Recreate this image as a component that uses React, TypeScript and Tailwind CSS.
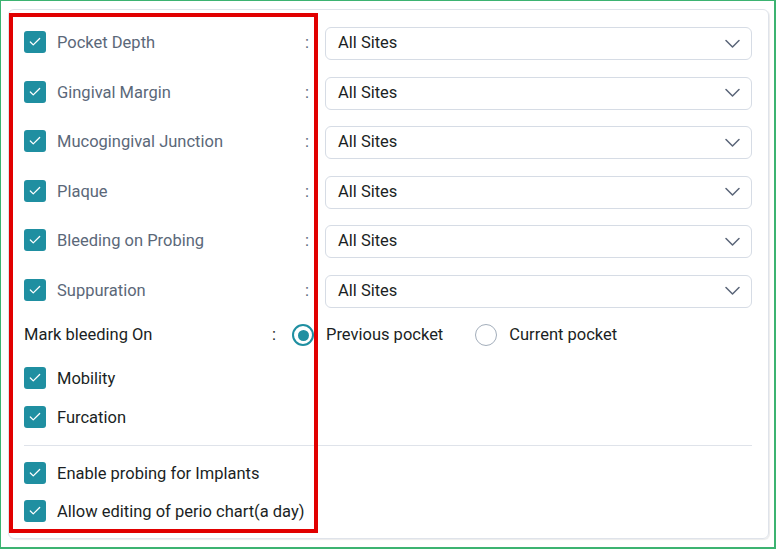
import { Check } from 'lucide-react'

const siteRows = [
  'Pocket Depth',
  'Gingival Margin',
  'Mucogingival Junction',
  'Plaque',
  'Bleeding on Probing',
  'Suppuration',
]

function Box() {
  return (
    <span className="w-[22px] h-[22px] mb-[3px] rounded-[3px] bg-[#1f8fa1] flex items-center justify-center shrink-0">
      <Check size={14} strokeWidth={2.2} className="text-white" />
    </span>
  )
}

function Radio({ on }: { on?: boolean }) {
  return on ? (
    <span className="block w-[22px] h-[22px] rounded-full border-[2.5px] border-[#1f8fa1] flex items-center justify-center shrink-0">
      <span className="block w-[11px] h-[11px] rounded-full bg-[#1f8fa1]" />
    </span>
  ) : (
    <span className="block w-[22px] h-[22px] rounded-full border border-[#a3aebb] shrink-0" />
  )
}

function Chevron() {
  return (
    <svg width="15" height="10" viewBox="0 0 15 10" fill="none" className="shrink-0">
      <polyline points="1,1.5 7.5,8 14,1.5" stroke="#5a6578" strokeWidth="1.5" strokeLinecap="round" strokeLinejoin="round" />
    </svg>
  )
}

export default function App() {
  return (
    <div
      className="relative w-[776px] h-[549px] bg-white border-l border-t border-r-2 border-b-2 border-[#3cb371] pt-[8px] pl-[7px] pr-[5px] pb-[8px] text-[16.5px]"
      style={{ fontFamily: 'Roboto, "Liberation Sans", sans-serif' }}
    >
      <div className="h-full rounded-md border border-[#dfe3ea] shadow-[1px_1px_1px_rgba(0,0,0,0.08)] pl-[15px] pr-[16px] pt-[9px]">
        {siteRows.map((label) => (
          <div key={label} className="h-[49.5px] flex items-center">
            <div className="w-[285px] flex items-center">
              <Box />
              <span className="ml-[11px] text-[#5b6879] flex-1">{label}</span>
              <span className="text-[#5b6879]">:</span>
            </div>
            <div className="ml-[16px] flex-1 h-[33px] rounded-md border border-[#d6dce5] flex items-center justify-between pl-[12px] pr-[11px] text-[#1b1f24]">
              <span>All Sites</span>
              <Chevron />
            </div>
          </div>
        ))}

        <div className="h-[38px] flex items-center text-[#1b1f24]">
          <span className="w-[248px]">Mark bleeding On</span>
          <span>:</span>
          <span className="ml-[16px]"><Radio on /></span>
          <span className="ml-[12px]">Previous pocket</span>
          <span className="ml-[32px]"><Radio /></span>
          <span className="ml-[12px]">Current pocket</span>
        </div>

        <div className="h-[50px] flex items-center text-[#1b1f24]">
          <Box />
          <span className="ml-[11px]">Mobility</span>
        </div>
        <div className="h-[29px] flex items-center text-[#1b1f24]">
          <Box />
          <span className="ml-[11px]">Furcation</span>
        </div>

        <div className="h-px bg-[#dfe3ea] mt-[12px]" />

        <div className="h-[29px] flex items-center text-[#1b1f24] mt-[14px]">
          <Box />
          <span className="ml-[11px]">Enable probing for Implants</span>
        </div>
        <div className="h-[29px] flex items-center text-[#1b1f24] mt-[9px]">
          <Box />
          <span className="ml-[11px]">Allow editing of perio chart(a day)</span>
        </div>
      </div>

      <div className="absolute left-[8px] top-[12px] w-[309px] h-[520px] border-4 border-[#e10000] pointer-events-none" />
    </div>
  )
}
